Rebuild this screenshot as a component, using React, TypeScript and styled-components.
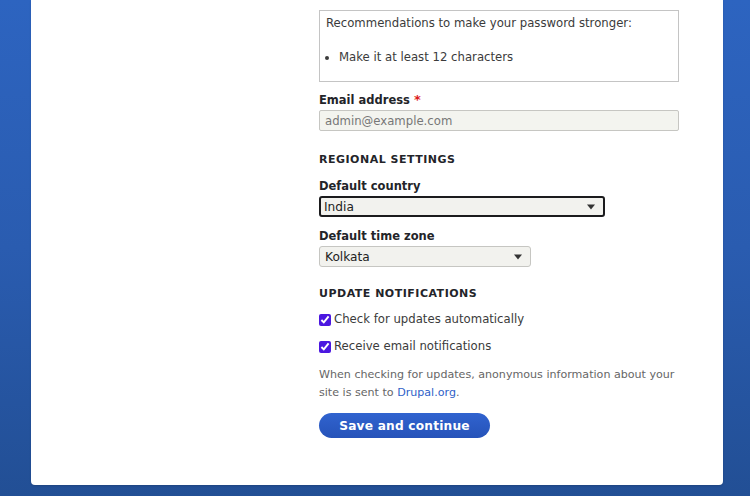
import React from 'react';
import styled, { createGlobalStyle } from 'styled-components';

const GlobalStyle = createGlobalStyle`
  html, body {
    margin: 0;
    padding: 0;
    height: 100%;
  }
  body {
    font-family: "DejaVu Sans", "Liberation Sans", sans-serif;
    background: linear-gradient(180deg, #2d64c0 0%, #2a5cb0 50%, #224f95 100%);
    overflow: hidden;
  }
`;

const Page = styled.div`
  width: 750px;
  height: 496px;
  padding: 0 27px 11px 31px;
  box-sizing: border-box;
`;

const Card = styled.main`
  height: 100%;
  background: #fff;
  border-radius: 0 0 4px 4px;
  display: grid;
  grid-template-columns: 288px 360px;
  box-shadow: 0 1px 2px rgba(0, 0, 0, 0.15);
`;

const Sidebar = styled.aside``;

const Form = styled.form`
  padding-top: 10px;
  display: flex;
  flex-direction: column;
  color: #333;
`;

const PasswordHint = styled.div`
  border: 1px solid #c4c4c4;
  height: 72px;
  box-sizing: border-box;
  padding: 5px 6px;
  font-size: 11.7px;
  color: #3b3b3b;
  line-height: 15px;

  p {
    margin: 0 0 19px;
  }
  ul {
    margin: 0;
    padding-left: 13px;
  }
`;

const Field = styled.div<{ $mt: number }>`
  margin-top: ${(p) => p.$mt}px;
  display: flex;
  flex-direction: column;
`;

const Label = styled.label`
  display: block;
  height: 15px;
  font-size: 11.5px;
  font-weight: bold;
  color: #232429;
  line-height: 15px;
  margin-bottom: 2px;
`;

const Required = styled.span`
  color: #dc1b1b;
  margin-left: 4px;
  font-size: 13px;
  line-height: 1;
`;

const TextInput = styled.input`
  display: block;
  width: 360px;
  height: 21px;
  box-sizing: border-box;
  border: 1px solid #c6c6c2;
  border-radius: 2px;
  background: #f3f4ef;
  font-family: inherit;
  font-size: 11.7px;
  padding: 0 5px;
  margin: 0;
  color: #333;

  &::placeholder {
    color: #777;
  }
`;

const SectionTitle = styled.h3<{ $mt: number }>`
  margin: ${(p) => p.$mt}px 0 0;
  font-size: 11px;
  font-weight: bold;
  letter-spacing: 0.5px;
  color: #232429;
  line-height: 15px;
  text-transform: uppercase;
`;

const SelectWrap = styled.div<{ $w: number; $focused?: boolean }>`
  position: relative;
  width: ${(p) => p.$w}px;
  height: 21px;
  box-sizing: border-box;
  border: ${(p) => (p.$focused ? '2px solid #1b1b1d' : '1px solid #c6c6c2')};
  border-radius: 3px;
  background: #f2f2ee;
`;

const Select = styled.select<{ $focused?: boolean }>`
  appearance: none;
  display: block;
  width: 100%;
  height: 100%;
  margin: 0;
  border: 0;
  background: transparent;
  font-family: inherit;
  font-size: 12.2px;
  color: #222;
  padding: 0 0 0 ${(p) => (p.$focused ? 3 : 5)}px;
  outline: none;
`;

const Arrow = styled.span`
  position: absolute;
  right: 8px;
  top: 50%;
  transform: translateY(-50%);
  width: 0;
  height: 0;
  border-left: 4px solid transparent;
  border-right: 4px solid transparent;
  border-top: 5px solid #333;
  pointer-events: none;
`;

const CheckRow = styled.label<{ $mt: number }>`
  margin-top: ${(p) => p.$mt}px;
  display: flex;
  align-items: center;
  gap: 3px;
  height: 15px;
  font-size: 11.7px;
  color: #3b3b3b;
  line-height: 15px;
`;

const Checkbox = styled.input`
  margin: 0;
  width: 12px;
  height: 12px;
  accent-color: #4b17e0;
`;

const Description = styled.p`
  margin: 12px 0 0;
  font-size: 11.1px;
  line-height: 18px;
  color: #666;

  a {
    color: #2f5fc8;
    text-decoration: none;
  }
`;

const Submit = styled.button`
  margin-top: 11px;
  align-self: flex-start;
  width: 171px;
  height: 25px;
  border: 0;
  border-radius: 13px;
  background: linear-gradient(180deg, #3063cf, #2653b9);
  color: #fff;
  font-family: inherit;
  font-size: 12.2px;
  font-weight: bold;
  letter-spacing: 0.2px;
  padding: 0;
`;

export default function App() {
  return (
    <>
      <GlobalStyle />
      <Page>
        <Card>
          <Sidebar />
          <Form>
            <PasswordHint>
              <p>Recommendations to make your password stronger:</p>
              <ul>
                <li>Make it at least 12 characters</li>
              </ul>
            </PasswordHint>

            <Field $mt={11}>
              <Label>
                Email address<Required>*</Required>
              </Label>
              <TextInput placeholder="admin@example.com" />
            </Field>

            <SectionTitle $mt={21}>Regional settings</SectionTitle>

            <Field $mt={12}>
              <Label>Default country</Label>
              <SelectWrap $w={286} $focused>
                <Select $focused defaultValue="India">
                  <option>India</option>
                </Select>
                <Arrow />
              </SelectWrap>
            </Field>

            <Field $mt={12}>
              <Label>Default time zone</Label>
              <SelectWrap $w={212}>
                <Select defaultValue="Kolkata">
                  <option>Kolkata</option>
                </Select>
                <Arrow />
              </SelectWrap>
            </Field>

            <SectionTitle $mt={19}>Update notifications</SectionTitle>

            <CheckRow $mt={11}>
              <Checkbox type="checkbox" defaultChecked />
              Check for updates automatically
            </CheckRow>
            <CheckRow $mt={12}>
              <Checkbox type="checkbox" defaultChecked />
              Receive email notifications
            </CheckRow>

            <Description>
              When checking for updates, anonymous information about your
              site is sent to <a href="#">Drupal.org</a>.
            </Description>

            <Submit type="button">Save and continue</Submit>
          </Form>
        </Card>
      </Page>
    </>
  );
}
